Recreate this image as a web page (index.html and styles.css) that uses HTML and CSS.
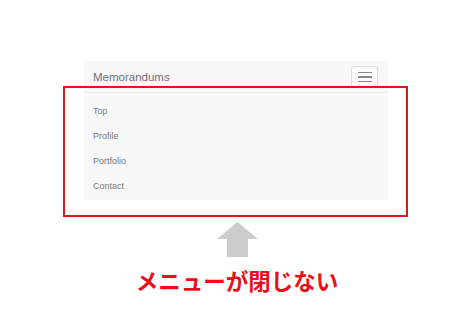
FILE: index.html
```html
<!DOCTYPE html>
<html lang="ja">
<head>
<meta charset="utf-8">
<title>Memorandums</title>
<link rel="stylesheet" href="styles.css">
</head>
<body>
<div class="stage">
  <nav class="navbar">
    <div class="navbar-header">
      <span class="brand">Memorandums</span>
      <button class="toggle" type="button" aria-label="menu">
        <span class="bar"></span><span class="bar"></span><span class="bar"></span>
      </button>
    </div>
    <ul class="menu">
      <li>Top</li>
      <li>Profile</li>
      <li>Portfolio</li>
      <li>Contact</li>
    </ul>
  </nav>
  <div class="highlight"></div>
  <svg class="arrow" width="41" height="35" viewBox="0 0 41 35" aria-hidden="true">
    <path d="M20.5 0 L41 17 L31 17 L31 35 L10 35 L10 17 L0 17 Z" fill="#cccccc"/>
  </svg>
  <p class="caption">メニューが閉じない</p>
</div>
</body>
</html>
```
FILE: styles.css
```css
html, body {
  margin: 0;
  padding: 0;
  background: #ffffff;
}
.stage {
  position: relative;
  width: 474px;
  height: 316px;
  padding-top: 61px;
  box-sizing: border-box;
  overflow: hidden;
}
.navbar {
  margin-left: 84px;
  width: 304px;
  background: #f8f8f8;
  font-family: "Liberation Sans", Arial, sans-serif;
}
.navbar-header {
  height: 31px;
  display: flex;
  align-items: center;
  justify-content: space-between;
  padding: 0 10px 0 9px;
  border-bottom: 1px solid #e2ecf1;
}
.brand {
  font-size: 11.5px;
  color: #707070;
}
.toggle {
  width: 27px;
  height: 22px;
  margin-top: 1px;
  padding: 0;
  border: 1px solid #dddddd;
  border-radius: 3px;
  background: #fbfbfb;
  display: flex;
  flex-direction: column;
  align-items: center;
  justify-content: center;
  gap: 3px;
}
.bar {
  display: block;
  width: 14px;
  height: 1.5px;
  background: #888888;
}
.menu {
  list-style: none;
  margin: 0;
  padding: 6px 0 1px 9px;
}
.menu li {
  height: 25px;
  line-height: 25px;
  font-size: 9px;
  color: #7a7a7a;
}
.highlight {
  position: absolute;
  left: 63px;
  top: 86px;
  width: 345px;
  height: 131px;
  border: 2px solid #dc1a1e;
  box-sizing: border-box;
}
.arrow {
  display: block;
  margin: 22px auto 0;
}
.caption {
  margin: 12px 0 0;
  text-align: center;
  font-family: "Noto Sans CJK JP", "Noto Sans", sans-serif;
  font-weight: 700;
  font-size: 22.5px;
  line-height: 23px;
  color: #e8111b;
}
```
